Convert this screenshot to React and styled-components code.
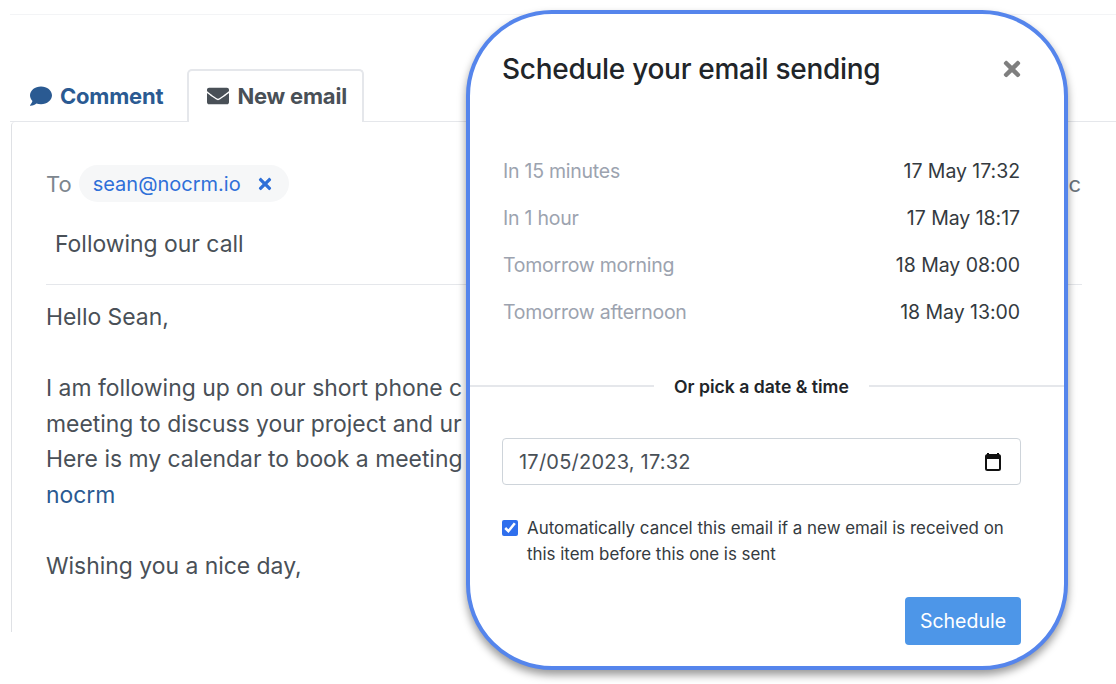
import React from 'react'
import styled, { createGlobalStyle } from 'styled-components'
import { FaComment, FaEnvelope, FaTimes } from 'react-icons/fa'

const GlobalStyle = createGlobalStyle`
  html, body {
    margin: 0;
    padding: 0;
    background: #fff;
    font-family: Inter, "Liberation Sans", sans-serif;
  }
`

const Page = styled.div`
  position: relative;
  width: 1116px;
  height: 684px;
  overflow: hidden;
  box-sizing: border-box;
  padding: 14px 0 0 10px;
`

const TopRule = styled.div`
  height: 1px;
  background: #f3f4f6;
`

const Tabs = styled.div`
  display: flex;
  align-items: flex-end;
  margin-top: 53px;
  height: 53px;
  border-bottom: 1px solid #e5e7eb;
`

const Tab = styled.div`
  display: flex;
  align-items: center;
  gap: 8px;
  box-sizing: border-box;
  height: 53px;
  padding: ${p => (p.$active ? '0 15px 2px 18px' : '2px 24px 0 20px')};
  font-size: 22px;
  font-weight: 700;
  letter-spacing: -0.2px;
  color: ${p => (p.$active ? '#495057' : '#2a5a92')};
  background: #fff;
  ${p => p.$active && `
    border: 2px solid #e5e7eb;
    border-bottom: none;
    border-radius: 5px 5px 0 0;
    margin-bottom: -1px;
  `}
`

const Panel = styled.div`
  position: relative;
  box-sizing: border-box;
  height: 510px;
  margin-left: 1px;
  padding: 43px 34px 0 34px;
  border-left: 1px solid #dfe1e5;
  border-top-left-radius: 4px;
  color: #495057;
  font-size: 22.9px;
  overflow: hidden;
`

const ToRow = styled.div`
  display: flex;
  align-items: center;
  justify-content: space-between;
  height: 37px;
`

const ToLeft = styled.div`
  display: flex;
  align-items: center;
  gap: 7px;
`

const ToLabel = styled.span`
  color: #7d868e;
  font-size: 22px;
`

const Chip = styled.span`
  display: inline-flex;
  align-items: center;
  gap: 15px;
  height: 37px;
  padding: 0 15px 0 14px;
  border-radius: 19px;
  background: #f6f7f8;
  color: #2f70d8;
  font-size: 20px;
`

const Cc = styled.span`
  color: #6c757d;
  font-size: 22px;
  margin-right: 1px;
`

const Subject = styled.div`
  padding: 24px 0 0 9px;
  height: 58px;
  line-height: 36px;
  box-sizing: content-box;
  border-bottom: 1px solid #e5e7eb;
`

const Body = styled.div`
  margin-top: 15px;
  line-height: 35.6px;
`

const Line = styled.div`
  white-space: nowrap;
  min-height: 35.6px;
`

const Link = styled.span`
  color: #2a5a92;
`

const Modal = styled.div`
  position: absolute;
  left: 466px;
  top: 10px;
  width: 602px;
  height: 660px;
  box-sizing: border-box;
  display: flex;
  flex-direction: column;
  background: #fff;
  border: 4px solid #5585ec;
  border-radius: 86px;
  box-shadow: 0 5px 9px rgba(0, 0, 0, 0.4);
  color: #212529;
`

const ModalHead = styled.div`
  display: flex;
  align-items: center;
  justify-content: space-between;
  padding: 35px 40px 0 32px;
  height: 40px;
`

const Title = styled.h2`
  margin: 0;
  font-size: 28px;
  font-weight: 500;
  letter-spacing: -0.28px;
  line-height: 40px;
`

const Close = styled.span`
  display: flex;
  color: #7f7f7f;
  font-size: 24px;
`

const Options = styled.div`
  display: flex;
  flex-direction: column;
  gap: 20px;
  margin-top: 68px;
  padding: 0 44px 0 33px;
`

const Option = styled.div`
  display: flex;
  justify-content: space-between;
  align-items: center;
  height: 27px;
  font-size: 19.5px;
  letter-spacing: -0.25px;
  color: #9ca3af;
`

const When = styled.span`
  color: #343a40;
  letter-spacing: -0.05px;
`

const Divider = styled.div`
  display: flex;
  align-items: center;
  gap: 20px;
  margin-top: 49px;
  height: 24px;
  font-size: 17.6px;
  font-weight: 600;
  white-space: nowrap;

  &::before,
  &::after {
    content: '';
    height: 2px;
    background: #e5e7eb;
  }
  &::before {
    flex: none;
    width: 184px;
  }
  &::after {
    flex: 1;
  }
`

const DateField = styled.div`
  display: flex;
  align-items: center;
  justify-content: space-between;
  box-sizing: border-box;
  height: 47px;
  margin: 40px 43px 0 32px;
  padding: 0 18px 0 16px;
  border: 1px solid #ced4da;
  border-radius: 4px;
  font-size: 20px;
  letter-spacing: 0.22px;
  color: #495057;
`

const CalendarIcon = styled.svg`
  display: block;
  width: 18px;
  height: 20px;
`

const CheckRow = styled.label`
  display: flex;
  align-items: flex-start;
  gap: 9px;
  margin: 30px 43px 0 32px;
  font-size: 16.9px;
  line-height: 26px;
  color: #343a40;
`

const Check = styled.input`
  flex: none;
  width: 16px;
  height: 16px;
  margin: 5px 0 0;
  accent-color: #2f6fed;
`

const Footer = styled.div`
  display: flex;
  justify-content: flex-end;
  margin: 30px 43px 0 0;
`

const ScheduleButton = styled.button`
  width: 116px;
  height: 48px;
  border: none;
  border-radius: 4px;
  background: #4d96e8;
  color: #fff;
  font-family: inherit;
  font-size: 19.5px;
`

const options = [
  ['In 15 minutes', '17 May 17:32'],
  ['In 1 hour', '17 May 18:17'],
  ['Tomorrow morning', '18 May 08:00'],
  ['Tomorrow afternoon', '18 May 13:00'],
]

export default function App() {
  return (
    <>
      <GlobalStyle />
      <Page>
        <TopRule />
        <Tabs>
          <Tab>
            <FaComment size={22} />
            Comment
          </Tab>
          <Tab $active>
            <FaEnvelope size={22} />
            New email
          </Tab>
        </Tabs>
        <Panel>
          <ToRow>
            <ToLeft>
              <ToLabel>To</ToLabel>
              <Chip>
                sean@nocrm.io
                <FaTimes size={18} />
              </Chip>
            </ToLeft>
            <Cc>Cc</Cc>
          </ToRow>
          <Subject>Following our call</Subject>
          <Body>
            <Line>Hello Sean,</Line>
            <Line />
            <Line>I am following up on our short phone c</Line>
            <Line>meeting to discuss your project and ur</Line>
            <Line>Here is my calendar to book a meeting</Line>
            <Line><Link>nocrm</Link></Line>
            <Line />
            <Line>Wishing you a nice day,</Line>
          </Body>
        </Panel>
        <Modal>
          <ModalHead>
            <Title>Schedule your email sending</Title>
            <Close><FaTimes /></Close>
          </ModalHead>
          <Options>
            {options.map(([label, when]) => (
              <Option key={label}>
                {label}
                <When>{when}</When>
              </Option>
            ))}
          </Options>
          <Divider>Or pick a date &amp; time</Divider>
          <DateField>
            17/05/2023, 17:32
            <CalendarIcon viewBox="0 0 18 20">
              <path
                d="M4 1v2M14 1v2"
                stroke="#111"
                strokeWidth="2"
                fill="none"
              />
              <rect x="2" y="3" width="14" height="15" rx="1.5" fill="none" stroke="#111" strokeWidth="2" />
              <rect x="2" y="3" width="14" height="4" fill="#111" />
            </CalendarIcon>
          </DateField>
          <CheckRow>
            <Check type="checkbox" defaultChecked />
            <span>Automatically cancel this email if a new email is received on this item before this one is sent</span>
          </CheckRow>
          <Footer>
            <ScheduleButton>Schedule</ScheduleButton>
          </Footer>
        </Modal>
      </Page>
    </>
  )
}
